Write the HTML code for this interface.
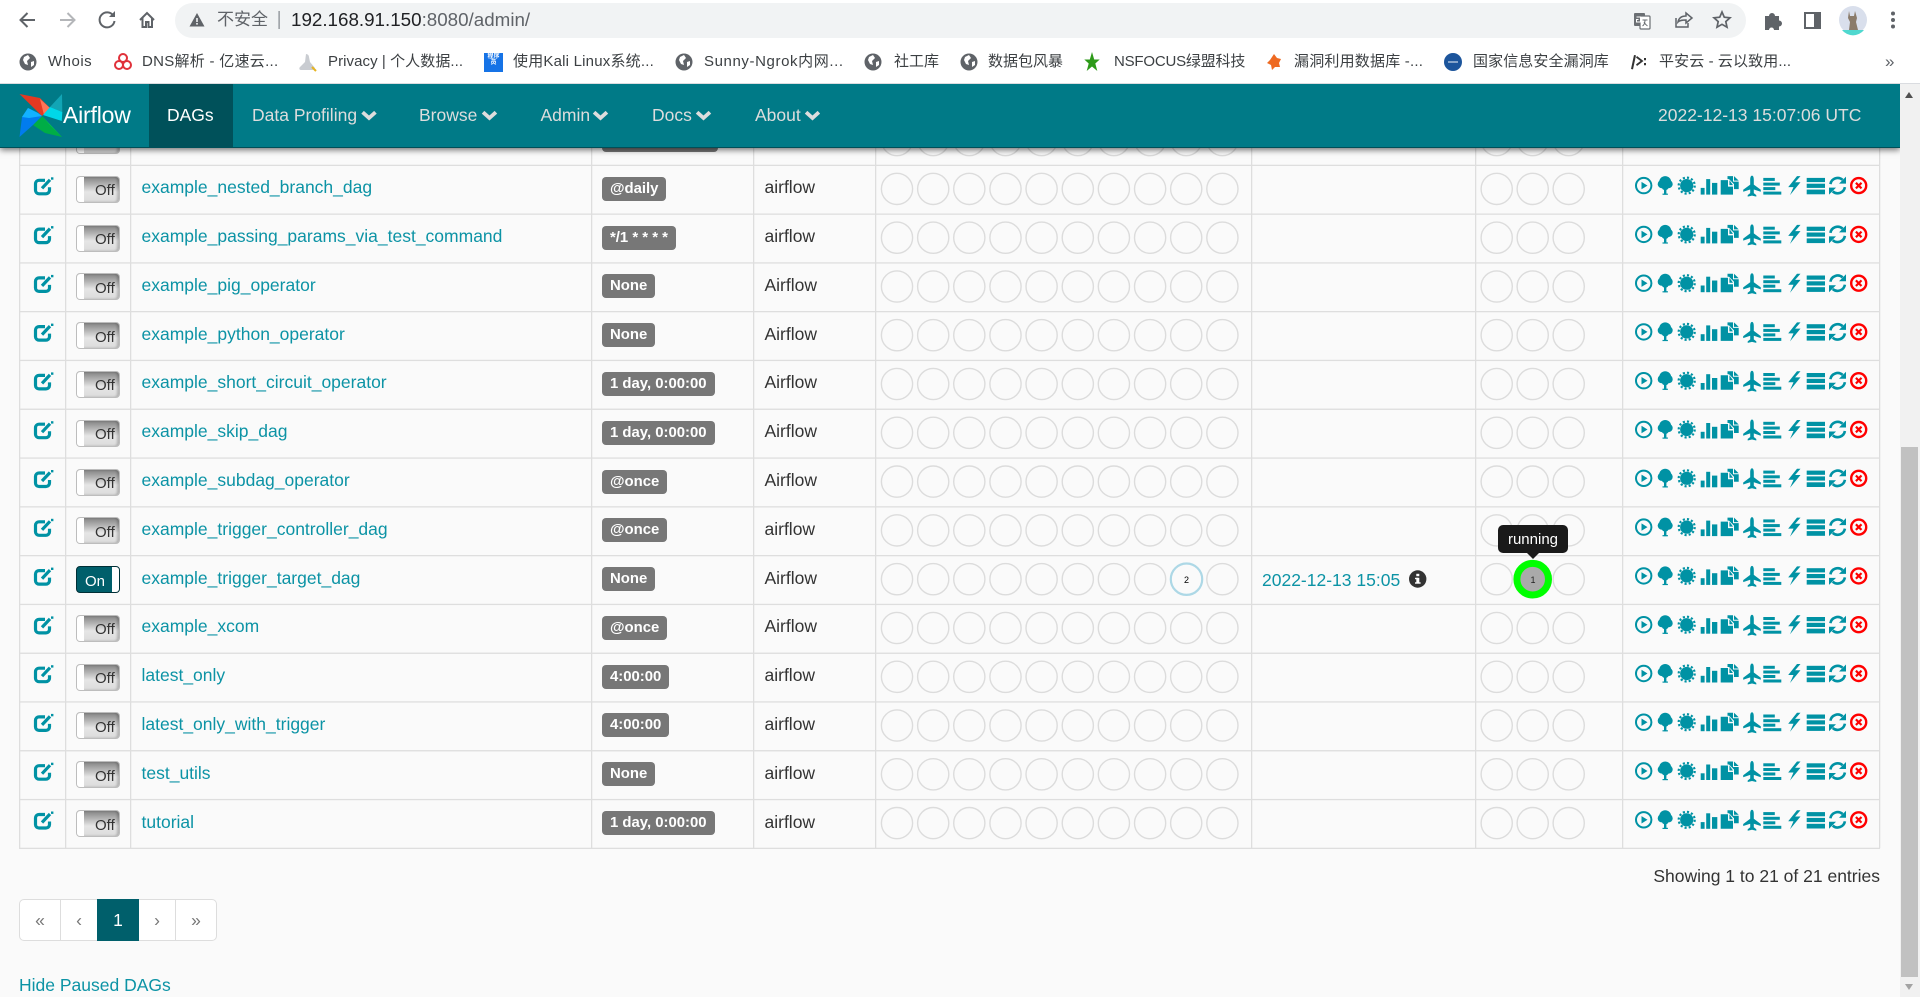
<!DOCTYPE html>
<html lang="en"><head><meta charset="utf-8"><title>Airflow</title>
<style>
html,body{margin:0;padding:0;width:1920px;height:997px;overflow:hidden;background:#fafafa;font-family:"Liberation Sans","Noto Sans CJK SC",sans-serif;color:#333}
div,a,span{position:absolute;white-space:nowrap}
a{color:#0c93a5;text-decoration:none}
#chrome{left:0;top:0;width:1920px;height:84px;background:#fff;border-bottom:1px solid #dadce0;box-sizing:border-box;z-index:5}
#omni{left:175px;top:3px;width:1571px;height:35px;background:#f1f3f4;border-radius:18px}
.bm{top:52px;font-size:15px;line-height:20px;color:#3c4043}
#nav{left:0;top:84px;width:1900px;height:64px;background:#007a87;border-bottom:1px solid #004f58;box-sizing:border-box;box-shadow:0 2px 6px rgba(0,0,0,.55);z-index:4}
.ni{top:0;line-height:62px;font-size:17.5px;color:#ddd}
#act{left:149px;top:0;width:84px;height:63px;background:#00515a}
.r{left:0;top:0;width:1900px;height:48.8px}
.n{left:141.5px;top:0;line-height:45px;font-size:17.5px;color:#0c93a5}
.o{left:764.5px;top:0;line-height:45px;font-size:17.5px;color:#333}
.l{left:602px;top:11.5px;height:24px;line-height:25px;padding:0 8px;background:#777;color:#fff;font-weight:bold;font-size:14.9px;border-radius:4px}
.t{left:76px;top:10.5px;width:44px;height:27px;box-sizing:border-box;border:1px solid #bdbdbd;border-radius:4px;background:linear-gradient(#858585,#b0b0b0 28%,#e6e6e6 60%,#dcdcdc);box-shadow:inset -2px 0 2px rgba(0,0,0,.2)}
.t:before{content:"";position:absolute;left:0;top:0;width:7px;height:25px;background:#fff;border-radius:3px 0 0 3px}
.t span{left:18px;top:4.5px;line-height:20px;font-size:15px;color:#333}
.on{background:#005f6b;border:1px solid #002f36;box-shadow:none}
.on:before{left:auto;right:0;border-radius:0 3px 3px 0}
.on span{left:8px;color:#fff}
.pg{top:899px;height:42px;line-height:42px;text-align:center;color:#777;font-size:17.5px}
</style></head>
<body>

<svg style="position:absolute;left:0;top:0;z-index:0" width="1920" height="997" viewBox="0 0 1920 997" fill="none">
<defs>
<g id="c1"><circle cx="0" cy="23.6" r="15.6" stroke="#dcdcdc" stroke-width="1.4"/></g>
<g id="row">
<use href="#c1" x="897"/><use href="#c1" x="933.2"/><use href="#c1" x="969.3"/><use href="#c1" x="1005.5"/><use href="#c1" x="1041.6"/><use href="#c1" x="1077.8"/><use href="#c1" x="1113.9"/><use href="#c1" x="1150.1"/><use href="#c1" x="1186.2"/><use href="#c1" x="1222.4"/>
<use href="#c1" x="1496.7"/><use href="#c1" x="1532.7"/><use href="#c1" x="1568.7"/>
<rect x="19" y="-.6" width="1861" height="1.3" fill="#dedede"/>
<g fill="#dedede"><rect x="19" width="1.3" height="48.8"/><rect x="65" width="1.3" height="48.8"/><rect x="130" width="1.3" height="48.8"/><rect x="591" width="1.3" height="48.8"/><rect x="753" width="1.3" height="48.8"/><rect x="875" width="1.3" height="48.8"/><rect x="1251" width="1.3" height="48.8"/><rect x="1475" width="1.3" height="48.8"/><rect x="1622" width="1.3" height="48.8"/><rect x="1879" width="1.3" height="48.8"/></g>
<!-- edit -->
<path d="M45 15H39a3.5 3.5 0 0 0-3.500 3.500v6.500a3.500 3.500 0 0 0 3.500 3.500h7a3.500 3.500 0 0 0 3.500-3.500V22" stroke="#0092a4" stroke-width="3.200"/>
<path d="M42 23l8-8.500" stroke="#0092a4" stroke-width="3.200"/><rect x="51" y="12" width="2.400" height="2.400" fill="#0092a4"/>
<!-- actions -->
<g transform="translate(0,-.7)">
<circle cx="1643.7" cy="21" r="7.7" stroke="#0092a4" stroke-width="2"/>
<path d="M1641.500 17.300l6 3.700-6 3.700z" fill="#0092a4"/>
<g fill="#0092a4">
<circle cx="1665.200" cy="17.500" r="6"/><circle cx="1661.800" cy="19.500" r="4.100"/><circle cx="1668.600" cy="19.500" r="4.100"/><circle cx="1665.200" cy="22" r="3.600"/>
<rect x="1664" y="22" width="2.400" height="8"/><rect x="1662.500" y="29" width="5.400" height="1.200"/>
<circle cx="1686.700" cy="21" r="6.600"/>
<rect x="1700.700" y="23.300" width="3.900" height="6.700"/><rect x="1706.200" y="14.500" width="4" height="15.500"/><rect x="1712" y="18.300" width="5.300" height="11.700"/>
<path d="M1720.700 15.500h7.300v6.500h5v8h-12.300z"/><path d="M1729.400 15.500l3.600 5h-3.600z"/><path d="M1727.500 11.500h5.500v5.500h5.700v7.500H1734v-5l-5-5h-1.500z"/><path d="M1734 11.500l4.700 4.500H1734z"/>
<path d="M1752 11c1.300 0 1.800 2 1.800 4v5l7 5.200v2l-7-2.300v3.600l2.500 2v1.500l-4.300-1-4.300 1v-1.500l2.500-2v-3.600l-7 2.300v-2l7-5.200v-5c0-2 .5-4 1.800-4z"/>
<rect x="1763.300" y="13.300" width="11.500" height="3"/><rect x="1763.300" y="18" width="16.500" height="3"/><rect x="1763.300" y="22.500" width="12" height="3"/><rect x="1763.300" y="27" width="18" height="3"/>
<path d="M1797 11.500l-8.800 11h5.300l-3.500 8 10.500-12.800h-5.400l5.400-6.200z"/>
<rect x="1806.700" y="13.300" width="18.300" height="4.200"/><rect x="1806.700" y="19.100" width="18.300" height="4.200"/><rect x="1806.700" y="25" width="18.300" height="4.700"/>
</g>
<circle cx="1686.700" cy="21" r="8" stroke="#0092a4" stroke-width="2.200" stroke-dasharray="2.100 2.090"/>
<path d="M1830.400 19.500a7.400 7.400 0 0 1 12.200-4.300M1844.900 22.500a7.400 7.400 0 0 1-12.200 4.300" stroke="#0092a4" stroke-width="2.600"/>
<path d="M1846 12v7h-7zM1829 30v-7h7z" fill="#0092a4"/>
<circle cx="1858.700" cy="21" r="7.500" stroke="#f00" stroke-width="2.400"/>
<path d="M1855.900 18.200l5.600 5.600M1861.500 18.200l-5.600 5.600" stroke="#f00" stroke-width="2.200"/>
</g>
</g>
</defs>
<use href="#row" y="116.500"/>
<use href="#row" y="165.300"/><use href="#row" y="214.100"/><use href="#row" y="262.900"/><use href="#row" y="311.600"/><use href="#row" y="360.400"/><use href="#row" y="409.200"/><use href="#row" y="458"/><use href="#row" y="506.800"/><use href="#row" y="555.600"/><use href="#row" y="604.400"/><use href="#row" y="653.200"/><use href="#row" y="701.900"/><use href="#row" y="750.700"/><use href="#row" y="799.500"/>
<rect x="19" y="847.700" width="1861" height="1.300" fill="#dedede"/>
<!-- highlighted runs -->
<circle cx="1186.500" cy="579.200" r="15.700" stroke="#add8e6" stroke-width="2.200" fill="#fafafa"/>
<circle cx="1532.700" cy="579.200" r="15.800" stroke="#0f0" stroke-width="7" fill="#aaa"/>
<circle cx="1417.700" cy="579" r="8.700" fill="#333"/>
<rect x="1416.300" y="577.800" width="3" height="5.400" fill="#fff"/><rect x="1416.300" y="573.800" width="3" height="2.400" fill="#fff"/><rect x="1415" y="577.800" width="3" height="1.400" fill="#fff"/><rect x="1415" y="582.300" width="5.600" height="1.400" fill="#fff"/>
</svg>

<!-- rows -->
<div class="r" style="top:116.500px"><div class="t"><span>Off</span></div><div class="l" style="width:100px;height:24px">&nbsp;</div></div>
<div class="r" style="top:165.300px"><div class="t"><span>Off</span></div><a class="n">example_nested_branch_dag</a><div class="l">@daily</div><div class="o">airflow</div></div>
<div class="r" style="top:214.100px"><div class="t"><span>Off</span></div><a class="n">example_passing_params_via_test_command</a><div class="l">*/1 * * * *</div><div class="o">airflow</div></div>
<div class="r" style="top:262.900px"><div class="t"><span>Off</span></div><a class="n">example_pig_operator</a><div class="l">None</div><div class="o">Airflow</div></div>
<div class="r" style="top:311.600px"><div class="t"><span>Off</span></div><a class="n">example_python_operator</a><div class="l">None</div><div class="o">Airflow</div></div>
<div class="r" style="top:360.400px"><div class="t"><span>Off</span></div><a class="n">example_short_circuit_operator</a><div class="l">1 day, 0:00:00</div><div class="o">Airflow</div></div>
<div class="r" style="top:409.200px"><div class="t"><span>Off</span></div><a class="n">example_skip_dag</a><div class="l">1 day, 0:00:00</div><div class="o">Airflow</div></div>
<div class="r" style="top:458px"><div class="t"><span>Off</span></div><a class="n">example_subdag_operator</a><div class="l">@once</div><div class="o">Airflow</div></div>
<div class="r" style="top:506.800px"><div class="t"><span>Off</span></div><a class="n">example_trigger_controller_dag</a><div class="l">@once</div><div class="o">airflow</div></div>
<div class="r" style="top:555.600px"><div class="t on"><span>On</span></div><a class="n">example_trigger_target_dag</a><div class="l">None</div><div class="o">Airflow</div>
<div style="left:1184px;top:17px;font-size:9px;line-height:14px;color:#000">2</div>
<a style="left:1262px;top:2px;line-height:45px;font-size:17.500px">2022-12-13 15:05</a>
<div style="left:1530.500px;top:17px;font-size:9px;line-height:14px;color:#222">1</div></div>
<div class="r" style="top:604.400px"><div class="t"><span>Off</span></div><a class="n">example_xcom</a><div class="l">@once</div><div class="o">Airflow</div></div>
<div class="r" style="top:653.200px"><div class="t"><span>Off</span></div><a class="n">latest_only</a><div class="l">4:00:00</div><div class="o">airflow</div></div>
<div class="r" style="top:701.900px"><div class="t"><span>Off</span></div><a class="n">latest_only_with_trigger</a><div class="l">4:00:00</div><div class="o">airflow</div></div>
<div class="r" style="top:750.700px"><div class="t"><span>Off</span></div><a class="n">test_utils</a><div class="l">None</div><div class="o">airflow</div></div>
<div class="r" style="top:799.500px"><div class="t"><span>Off</span></div><a class="n">tutorial</a><div class="l">1 day, 0:00:00</div><div class="o">airflow</div></div>

<!-- tooltip -->
<div style="left:1498px;top:525px;width:70px;height:28px;line-height:29px;background:#1a1a1a;color:#fff;font-size:15px;text-align:center;border-radius:5px;z-index:2">running</div>
<div style="left:1527px;top:553px;width:0;height:0;border-left:6px solid transparent;border-right:6px solid transparent;border-top:6px solid #1a1a1a;z-index:2"></div>

<!-- footer -->
<div style="right:40px;top:865px;line-height:22px;font-size:17.500px;color:#333">Showing 1 to 21 of 21 entries</div>
<div style="left:19px;top:899px;width:198px;height:42px;background:#fff;border:1.300px solid #ddd;box-sizing:border-box;border-radius:5px"></div>
<div class="pg" style="left:20px;width:40px">«</div>
<div style="left:60px;top:899px;width:1.300px;height:42px;background:#ddd"></div>
<div class="pg" style="left:61px;width:36px">‹</div>
<div class="pg" style="left:97px;width:42px;background:#005f6b;color:#fff">1</div>
<div class="pg" style="left:139px;width:36px">›</div>
<div style="left:175px;top:899px;width:1.300px;height:42px;background:#ddd"></div>
<div class="pg" style="left:176px;width:40px">»</div>
<a style="left:19px;top:974px;line-height:22px;font-size:17.500px">Hide Paused DAGs</a>

<!-- scrollbar -->
<div style="left:1900px;top:84px;width:20px;height:913px;background:#f1f1f1;z-index:6"></div>
<div style="left:1901px;top:447px;width:17px;height:530px;background:#c1c1c1;z-index:7"></div>
<div style="left:1905px;top:92px;width:0;height:0;border-left:4.500px solid transparent;border-right:4.500px solid transparent;border-bottom:6px solid #505050;z-index:7"></div>
<div style="left:1905px;top:984px;width:0;height:0;border-left:4.500px solid transparent;border-right:4.500px solid transparent;border-top:6px solid #a3a3a3;z-index:7"></div>

<!-- navbar -->
<div id="nav">
<div id="act"></div>
<svg style="position:absolute;left:0;top:0" width="820" height="63" viewBox="0 0 820 63">
<path d="M19.500 10L40 14 50 24 42 32z" fill="#e43921"/><path d="M40 15l10 9-6 7z" fill="#ff7557"/>
<path d="M62 10l.3 18L50 23z" fill="#12a5b5"/><path d="M50 23l12.300 5-.5 9L43 31z" fill="#00d7e8"/>
<path d="M42 32l-9 9 12 8 17 4z" fill="#00ad46"/><path d="M42 32l8 9 12 12z" fill="#04d659"/>
<path d="M19.500 53L22 33l6-9 10 5 4 3-9 9z" fill="#017cee"/><path d="M22 33l6-9 10 5 4 3-13 2z" fill="#12b2ff"/>
<g fill="none" stroke="#ddd" stroke-width="3.800" stroke-linecap="square"><path d="M364 29.500l5 4.500 5-4.500M484.500 29.500l5 4.500 5-4.500M595.500 29.500l5 4.500 5-4.500M698.500 29.500l5 4.500 5-4.500M807.500 29.500l5 4.500 5-4.500"/></g>
</svg>
<div style="left:63px;top:0;line-height:62px;font-size:23px;letter-spacing:-.2px;color:#fff">Airflow</div>
<div class="ni" style="left:167px;color:#fff">DAGs</div>
<div class="ni" style="left:252px">Data Profiling</div>
<div class="ni" style="left:419px">Browse</div>
<div class="ni" style="left:540.500px">Admin</div>
<div class="ni" style="left:652px">Docs</div>
<div class="ni" style="left:755px">About</div>
<div class="ni" style="left:1658px">2022-12-13 15:07:06 UTC</div>
</div>

<!-- browser chrome -->
<div id="chrome">
<div id="omni"></div>
<svg style="position:absolute;left:0;top:0" width="1920" height="84" viewBox="0 0 1920 84" fill="none">
<g stroke="#5f6368" stroke-width="2"><path d="M35 20H21M27.500 13l-7 7 7 7"/></g>
<g stroke="#b4b6b9" stroke-width="2"><path d="M60 20h14M67.500 13l7 7-7 7"/></g>
<g stroke="#5f6368" stroke-width="2"><path d="M113.500 16a7.500 7.500 0 1 0 1 5"/><path d="M115 11v6h-6" fill="#5f6368" stroke="none"/><path d="M140 20l7-7 7 7M142.500 18v9h3.500v-5h2.500v5h3.500v-9"/></g>
<path d="M197 13l7.500 13.500h-15zM196.200 18v4h1.600v-4zM196.200 23v1.600h1.600V23z" fill="#5f6368" fill-rule="evenodd"/>
<rect x="278.500" y="11" width="1.200" height="18" fill="#80868b"/>
<!-- right icons -->
<rect x="1634" y="13" width="11" height="13" rx="1" fill="#6b6f73"/><rect x="1640" y="16" width="10" height="13" rx="1" fill="#fff" stroke="#6b6f73" stroke-width="1.200"/>
<path d="M1636.500 17h4v5h-4v-2.500h2" stroke="#fff" stroke-width="1"/><path d="M1642.500 20h5M1645 20c0 3-1 5-2.500 6M1644 22c1 2 2 3 3.500 4" stroke="#6b6f73" stroke-width="1"/>
<path d="M1676 18v9h12v-4M1678 22c1-5 5-6 8-6v-3l6 5-6 5v-3c-3 0-6 0-8 2z" stroke="#5f6368" stroke-width="1.500"/>
<path d="M1722 12l2.300 5.200 5.700.6-4.200 3.800 1.200 5.600-5-2.900-5 2.900 1.200-5.600-4.200-3.800 5.700-.6z" stroke="#5f6368" stroke-width="1.700"/>
<path d="M1765 16h4a3 3 0 0 1 6 0h4v4.500a3 3 0 0 1 0 6V30h-5a2.500 2.500 0 0 0-5 0h-4z" fill="#5f6368"/>
<rect x="1805" y="13" width="15" height="15" stroke="#5f6368" stroke-width="2"/><rect x="1814" y="13" width="6" height="15" fill="#5f6368"/>
<circle cx="1853" cy="20" r="14" fill="#d9dfec"/><path d="M1842 30a14 14 0 0 0 22 0z" fill="#4fd8cf"/><path d="M1849 11l1 5 4 0 1-5 2 7-1 4 2 8h-9l1-8-2-4z" fill="#8a7b6a"/>
<g fill="#5f6368"><circle cx="1893" cy="13.500" r="2"/><circle cx="1893" cy="20" r="2"/><circle cx="1893" cy="26.500" r="2"/></g>
<!-- favicons -->
<g fill="#5f6368"><circle cx="28" cy="62" r="8.500"/><circle cx="684" cy="62" r="8.500"/><circle cx="873" cy="62" r="8.500"/><circle cx="969" cy="62" r="8.500"/></g>
<g fill="#fff"><path d="M24 57l4-2 2 3-3 3 1 4-3-1-2-4zM31 62l3-1 0 4-3 2z"/><path d="M680 57l4-2 2 3-3 3 1 4-3-1-2-4zM687 62l3-1 0 4-3 2z"/><path d="M869 57l4-2 2 3-3 3 1 4-3-1-2-4zM876 62l3-1 0 4-3 2z"/><path d="M965 57l4-2 2 3-3 3 1 4-3-1-2-4zM972 62l3-1 0 4-3 2z"/></g>
<g stroke="#e0313a" stroke-width="2"><circle cx="123" cy="58" r="4"/><circle cx="119" cy="65" r="4"/><circle cx="127" cy="65" r="4"/></g>
<path d="M306 54a3 3 0 0 1 3 3l1 5 5 6-2 2h-12c-2 0-2-2-1-3l5-5z" fill="#c9ccd1"/><path d="M312 67l4 4" stroke="#e6b422" stroke-width="2"/>
<rect x="484" y="53" width="19" height="19" fill="#1673e6"/>
<path d="M1092 52l2.200 7.500h5.500l-4.400 4 2 7.500-5.300-4.500-5.300 4.500 2-7.500-4.400-4h5.500z" fill="#2d9a19"/>
<path d="M1274 54l3 4 4 1-2 4 1 4-5 0-3 3-1-5-4-2 3-3z" fill="#ee6a22"/>
<circle cx="1453" cy="62" r="9" fill="#1c559c"/><rect x="1448" y="61.200" width="10" height="1.600" fill="#9fb8d6"/>
<path d="M1631 69l3-14 2 .4-3 14zM1637 56l6.500 5-6.500 5-1-1.600 4.500-3.400-4.500-3.400zM1644 58h2v2.200h-2zM1644 63h2v2.200h-2z" fill="#333"/>
</svg>
<div style="left:217px;top:8px;line-height:24px;font-size:17px;color:#5f6368">不安全</div>
<div style="left:291px;top:8px;line-height:24px;font-size:18.800px;color:#5f6368"><span style="position:static;color:#202124">192.168.91.150</span>:8080/admin/</div>
<div class="bm" style="left:48px;letter-spacing:.5px">Whois</div>
<div class="bm" style="left:142px;letter-spacing:.28px">DNS解析 - 亿速云...</div>
<div class="bm" style="left:328px;letter-spacing:.07px">Privacy | 个人数据...</div>
<div style="left:484px;top:53px;width:19px;height:19px;line-height:6.300px;color:#fff;font-size:6px;font-weight:bold;text-align:center;white-space:normal;padding-top:1px;box-sizing:border-box">程序<br>员</div>
<div class="bm" style="left:513px;letter-spacing:.2px">使用Kali Linux系统...</div>
<div class="bm" style="left:704px;letter-spacing:.6px">Sunny-Ngrok内网...</div>
<div class="bm" style="left:894px">社工库</div>
<div class="bm" style="left:988px">数据包风暴</div>
<div class="bm" style="left:1114px;letter-spacing:-.2px">NSFOCUS绿盟科技</div>
<div class="bm" style="left:1294px;letter-spacing:.2px">漏洞利用数据库 -...</div>
<div class="bm" style="left:1473px;letter-spacing:.1px">国家信息安全漏洞库</div>
<div class="bm" style="left:1659px;letter-spacing:.1px">平安云 - 云以致用...</div>
<div class="bm" style="left:1885px;font-size:17px;color:#5f6368">»</div>
</div>
</body></html>
